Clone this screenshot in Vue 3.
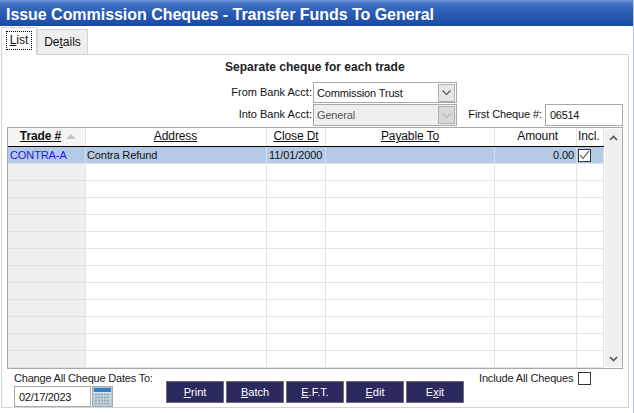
<script setup>
const emptyRows = Array.from({ length: 12 })
</script>

<template>
  <div class="win">
    <div class="title">Issue Commission Cheques - Transfer Funds To General</div>
    <div class="tabs">
      <div class="tab active"><span class="focus"><u>L</u>ist</span></div>
      <div class="tab">De<u>t</u>ails</div>
    </div>
    <div class="panel">
      <div class="heading">Separate cheque for each trade</div>
      <div class="form-row from">
        <label>From Bank Acct:</label>
        <div class="combo"><span>Commission Trust</span><b class="drop"><svg width="11" height="7" viewBox="0 0 11 7"><path d="M1.5 1.5 5.5 5.5 9.5 1.5" fill="none" stroke="#555" stroke-width="1.2"/></svg></b></div>
      </div>
      <div class="form-row into">
        <label>Into Bank Acct:</label>
        <div class="combo off"><span>General</span><b class="drop"><svg width="11" height="7" viewBox="0 0 11 7"><path d="M1.5 1.5 5.5 5.5 9.5 1.5" fill="none" stroke="#bbb" stroke-width="1.2"/></svg></b></div>
        <label class="fc">First Cheque #:</label>
        <div class="input cheque">06514</div>
      </div>
      <div class="grid">
        <div class="table">
          <div class="row head">
            <div class="c c1 key"><u>Trade #</u><i class="sort"></i></div>
            <div class="c c2"><u>Address</u></div>
            <div class="c c3"><u>Close Dt</u></div>
            <div class="c c4"><u>Payable To</u></div>
            <div class="c c5 amt">Amount</div>
            <div class="c c6">Incl.</div>
          </div>
          <div class="row sel">
            <div class="c c1 blue">CONTRA-A</div>
            <div class="c c2">Contra Refund</div>
            <div class="c c3">11/01/2000</div>
            <div class="c c4"></div>
            <div class="c c5 num">0.00</div>
            <div class="c c6 chk"><span class="check"><svg width="11" height="10" viewBox="0 0 11 10"><path d="M1 5 4 8.5 10 1" fill="none" stroke="#444" stroke-width="1.1"/></svg></span></div>
          </div>
          <div v-for="(_, i) in emptyRows" :key="i" class="row">
            <div class="c c1 gray"></div><div class="c c2"></div><div class="c c3"></div><div class="c c4"></div><div class="c c5"></div><div class="c c6"></div>
          </div>
        </div>
        <div class="scroll">
          <svg width="9" height="6" viewBox="0 0 9 6"><path d="M1 5 4.5 1.5 8 5" fill="none" stroke="#555" stroke-width="1.6"/></svg>
          <svg width="9" height="6" viewBox="0 0 9 6"><path d="M1 1 4.5 4.5 8 1" fill="none" stroke="#555" stroke-width="1.6"/></svg>
        </div>
      </div>
      <div class="footer">
        <div class="dates">
          <div class="dlabel">Change All Cheque Dates To:</div>
          <div class="dline">
            <div class="input date">02/17/2023</div>
            <div class="cal">
              <svg width="19" height="19" viewBox="0 0 19 19">
                <rect width="19" height="19" fill="#b9cbd6"/>
                <rect x="1" y="1" width="17" height="4" fill="#2f7fc4"/>
                <rect x="1" y="5" width="17" height="1" fill="#dbe6ee"/>
                <path d="M3 7v10M6 7v10M9 7v10M12 7v10M15 7v10" stroke="#7c929e" stroke-width="1.2"/>
                <path d="M1 9h17M1 12h17M1 15h17" stroke="#d5e0e6" stroke-width="1"/>
              </svg>
            </div>
          </div>
        </div>
        <div class="buttons">
          <button class="btn"><u>P</u>rint</button>
          <button class="btn"><u>B</u>atch</button>
          <button class="btn"><u>E</u>.F.T.</button>
          <button class="btn"><u>E</u>dit</button>
          <button class="btn">E<u>x</u>it</button>
        </div>
        <div class="incl">
          <span>Include All Cheques</span><span class="box"></span>
        </div>
      </div>
    </div>
  </div>
</template>

<style>
html, body { margin: 0; background: #fff; }
</style>

<style scoped>
.win {
  width: 634px; height: 413px; overflow: hidden; background: #fff;
  font-family: "Liberation Sans", Arial, sans-serif; font-size: 11px; color: #111;
  box-sizing: border-box; display: flex; flex-direction: column;
  border-right: 1px solid #b5c8e6;
}
.title {
  height: 26px; flex: none; box-sizing: border-box; padding: 3px 0 0 6px;
  background: linear-gradient(#6f98d8 0, #3f70c4 4px, #2a5cb4 50%, #1b4aa3 100%);
  color: #fff; font-weight: bold; font-size: 16px; line-height: 23px; letter-spacing: -.04px;
}
.tabs { display: flex; height: 28px; flex: none; box-sizing: border-box; padding-left: 1px; align-items: flex-end; }
.tab {
  width: 51px; height: 25px; box-sizing: border-box;
  background: #efefef; border: 1px solid #d4d4d4; border-bottom: 0;
  font-size: 12px; display: flex; align-items: center; justify-content: center;
}
.tab.active {
  width: 36px; height: 28px; background: #fff; position: relative; top: 1px; z-index: 1; align-items: flex-start;
  padding-top: 3px;
}
.focus { border: 1px dotted #000; padding: 1px 3px 2px; line-height: 14px; font-size: 12px; }
.panel {
  width: 628px; height: 354px; flex: none; box-sizing: border-box; margin-left: 1px;
  border: 1px solid #d4d4d4; padding: 0 5px;
}
.heading { height: 27px; padding-top: 5px; box-sizing: border-box; padding-left: 218px; font-weight: bold; font-size: 12px; line-height: 15px; color: #222; white-space: nowrap; letter-spacing: .03px; }
.form-row { display: flex; align-items: flex-start; height: 22px; white-space: nowrap; }
label { width: 306px; text-align: right; padding: 3px 1px 0 0; box-sizing: border-box; line-height: 14px; flex: none; }
.combo {
  width: 144px; height: 21px; box-sizing: border-box; border: 1px solid #a8a8a8; padding-left: 3px; flex: none;
  display: flex; align-items: center; justify-content: space-between; letter-spacing: -.15px;
}
.into .combo { height: 22px; }
.combo.off { background: #efefef; color: #555; }
.drop {
  width: 17px; height: 18px; margin-right: 1px; background: #e6e6e6; border: 1px solid #b0b0b0;
  display: flex; align-items: center; justify-content: center; box-sizing: border-box;
}
.off .drop { background: #d8d8d8; }
.fc { width: 88px; padding-right: 3px; letter-spacing: -.1px; }
.input { border: 1px solid #a8a8a8; box-sizing: border-box; padding-left: 4px; display: flex; align-items: center; background: #fff; letter-spacing: -.3px; }
.cheque { width: 78px; height: 22px; }
.grid {
  width: 616px; height: 242px; box-sizing: border-box; margin-top: 1px; border: 1px solid #a8a8a8;
  display: flex; background: #fff;
}
.table { width: 596px; flex: none; overflow: hidden; }
.row { display: flex; height: 17px; box-sizing: border-box; border-bottom: 1px solid #e4e4e4; }
.row.head { height: 19px; border-bottom: 1px solid #000; font-size: 12px; color: #111; }
.c { box-sizing: border-box; border-right: 1px solid #e4e4e4; padding: 0 2px; line-height: 16px; flex: none; white-space: nowrap; letter-spacing: -.1px; }
.c2 { padding-left: 1px; }
.head .c { text-align: center; line-height: 17px; }
.c1 { width: 78px; }
.c2 { width: 181px; }
.c3 { width: 59px; }
.c4 { width: 169px; }
.c5 { width: 82px; }
.c6 { width: 27px; }
.c6.chk { padding-left: 1px; }
.head .amt { text-align: right; padding-right: 18px; }
.head .c6 { padding: 0 0 0 1px; text-align: left; }
.key { font-weight: bold; background: #f5f5f5; }
.head .c1 { padding-right: 14px; position: relative; }
.sort { position: absolute; right: 9px; top: 6px; border: 5px solid transparent; border-top: 0; border-bottom: 5px solid #c4c4c4; }
.sel { background: #b5cae6; border-bottom-color: #d8e2f0; }
.sel .c { border-right-color: #d2dff0; }
.blue { color: #1a1ad8; }
.gray { background: #efefef; }
.num { text-align: right; }
.check {
  display: block; width: 13px; height: 13px; box-sizing: border-box; border: 1px solid #333; background: #fff;
  margin: 2px 0 0 0; line-height: 0;
}
.scroll {
  width: 17px; margin: 1px 0 1px 1px; background: #f0f0f0; display: flex; flex-direction: column; justify-content: space-between; align-items: center; padding: 6px 0 5px; box-sizing: border-box;
}
.footer { display: flex; }
.dates { width: 149px; padding: 3px 0 0 7px; box-sizing: border-box; flex: none; white-space: nowrap; }
.dlabel { line-height: 13px; color: #222; letter-spacing: -.2px; }
.dline { display: flex; margin-top: 1px; }
.date { width: 77px; height: 21px; }
.cal { margin-left: 1px; border: 1px solid #a8a8a8; height: 19px; width: 19px; }
.buttons { display: flex; gap: 2px; margin-top: 12px; margin-left: 10px; flex: none; }
.btn {
  width: 58px; height: 22px; box-sizing: border-box; background: #2a2a5e; border: 1px solid #6d6d7a; color: #fff;
  font: 11px "Liberation Sans", Arial, sans-serif; padding: 0;
}
.incl { display: flex; align-items: flex-start; margin-left: 15px; padding-top: 3px; color: #222; line-height: 13px; white-space: nowrap; letter-spacing: -.15px; }
.box { width: 13px; height: 13px; box-sizing: border-box; border: 1px solid #333; margin-left: 5px; }
</style>
